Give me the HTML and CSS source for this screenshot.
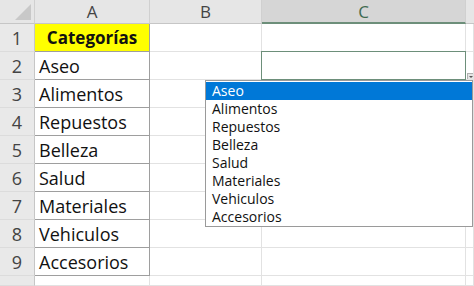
FILE: index.html
```html
<!DOCTYPE html>
<html lang="es">
<head>
    <meta charset="UTF-8">
    <title>Lista desplegable</title>
    <link rel="stylesheet" href="styles.css">
</head>
<body>
    <div class="sheet">
        <div class="corner"><div class="tri"></div></div>
        <div class="col-head">A</div>
        <div class="col-head">B</div>
        <div class="col-head active">C</div>
        <div class="col-head rest"></div>

        <div class="row-head">1</div>
        <div class="cell a title">Categorías</div>
        <div class="cell"></div>
        <div class="cell"></div>
        <div class="cell"></div>

        <div class="row-head">2</div>
        <div class="cell a">Aseo</div>
        <div class="cell"></div>
        <div class="cell selected"><span class="drop-btn"></span></div>
        <div class="cell"></div>

        <div class="row-head">3</div>
        <div class="cell a">Alimentos</div>
        <div class="cell"></div>
        <div class="cell"></div>
        <div class="cell"></div>

        <div class="row-head">4</div>
        <div class="cell a">Repuestos</div>
        <div class="cell"></div>
        <div class="cell"></div>
        <div class="cell"></div>

        <div class="row-head">5</div>
        <div class="cell a">Belleza</div>
        <div class="cell"></div>
        <div class="cell"></div>
        <div class="cell"></div>

        <div class="row-head">6</div>
        <div class="cell a">Salud</div>
        <div class="cell"></div>
        <div class="cell"></div>
        <div class="cell"></div>

        <div class="row-head">7</div>
        <div class="cell a">Materiales</div>
        <div class="cell"></div>
        <div class="cell"></div>
        <div class="cell"></div>

        <div class="row-head">8</div>
        <div class="cell a">Vehiculos</div>
        <div class="cell"></div>
        <div class="cell"></div>
        <div class="cell"></div>

        <div class="row-head">9</div>
        <div class="cell a">Accesorios</div>
        <div class="cell"></div>
        <div class="cell"></div>
        <div class="cell"></div>

        <div class="row-head"></div>
        <div class="cell"></div>
        <div class="cell"></div>
        <div class="cell"></div>
        <div class="cell"></div>
    </div>

    <ul class="dropdown">
        <li class="current">Aseo</li>
        <li>Alimentos</li>
        <li>Repuestos</li>
        <li>Belleza</li>
        <li>Salud</li>
        <li>Materiales</li>
        <li>Vehiculos</li>
        <li>Accesorios</li>
    </ul>
</body>
</html>
```

FILE: styles.css
```css
body {
    margin: 0;
    width: 474px;
    height: 286px;
    overflow: hidden;
    background: white;
    font-family: 'Open Sans', 'Noto Sans', sans-serif;
    position: relative;
}

.sheet {
    display: grid;
    grid-template-columns: 35px 115px 112px 204px 1fr;
    grid-template-rows: 24px repeat(9, 28px) 10px;
}

.corner {
    background: #e6e6e6;
    border-right: 1px solid #d0d0d0;
    border-bottom: 1px solid #c6c6c6;
    position: relative;
}

.tri {
    position: absolute;
    right: 3px;
    bottom: 3px;
    width: 0;
    height: 0;
    border-left: 16px solid transparent;
    border-bottom: 16px solid #c8c8c8;
}

.col-head {
    background: #e6e6e6;
    border-right: 1px solid #d0d0d0;
    border-bottom: 1px solid #c6c6c6;
    color: #444;
    font-size: 17px;
    display: flex;
    align-items: center;
    justify-content: center;
}

.col-head.active {
    background: #d6d6d6;
    color: #3f6b50;
    border-bottom: 2px solid #6d8f7a;
}

.col-head.rest {
    border-right: none;
}

.row-head {
    background: #e9e9e9;
    border-right: 1px solid #c6c6c6;
    border-bottom: 1px solid #dcdcdc;
    color: #444;
    font-size: 18px;
    display: flex;
    align-items: center;
    justify-content: center;
}

.cell {
    border-right: 1px solid #e2e2e2;
    border-bottom: 1px solid #e2e2e2;
    font-size: 18px;
    color: #111;
    display: flex;
    align-items: center;
    padding-left: 4px;
    position: relative;
}

.cell.a {
    border-right: 1px solid #9e9e9e;
    border-bottom: 1px solid #9e9e9e;
}

.cell.title {
    background: #ffff00;
    font-weight: bold;
    font-size: 17px;
    justify-content: center;
    padding-left: 0;
}

.cell.selected {
    border: 1px solid #6d8f7a;
    margin: -1px 0 0 -1px;
}

.drop-btn {
    position: absolute;
    right: -9px;
    bottom: -1px;
    width: 7px;
    height: 7px;
    background: #e4e4e4;
    border: 1px solid #b0b0b0;
    box-sizing: border-box;
}

.drop-btn::after {
    content: '';
    position: absolute;
    left: 1px;
    top: 2px;
    border-left: 2px solid transparent;
    border-right: 2px solid transparent;
    border-top: 2px solid #555;
}

.dropdown {
    position: absolute;
    left: 205px;
    top: 80px;
    width: 268px;
    height: 147px;
    margin: 0;
    padding: 1px 0;
    list-style: none;
    background: white;
    border: 1px solid #9a9a9a;
    box-sizing: border-box;
    font-size: 14px;
    color: #111;
}

.dropdown li {
    height: 18px;
    line-height: 18px;
    padding-left: 6px;
}

.dropdown li.current {
    background: #0078d7;
    color: white;
}
```
